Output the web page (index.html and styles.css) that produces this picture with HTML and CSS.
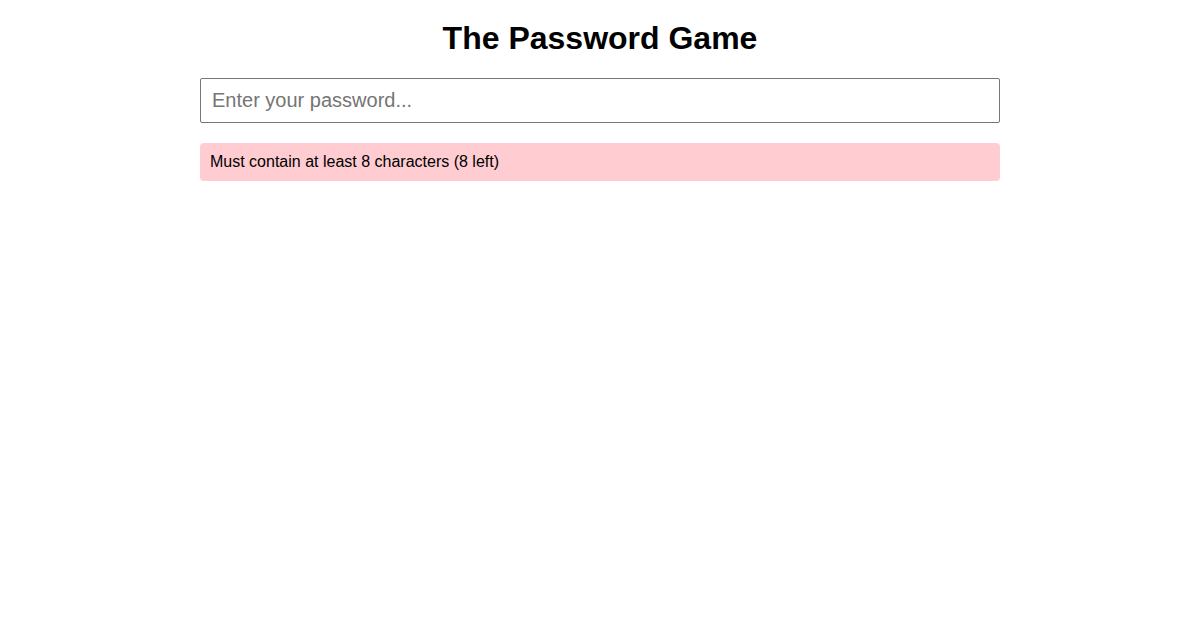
FILE: index.html
```html
<!DOCTYPE html>
<html>
<head>
<meta charset="utf-8">
<link rel="stylesheet" href="styles.css">
</head>
<body>
<main class="game">
  <h1 class="title">The Password Game</h1>
  <input class="password" type="text" placeholder="Enter your password...">
  <div class="rules">
    <div class="rule rule-fail">Must contain at least 8 characters (8 left)</div>
  </div>
</main>
</body>
</html>
```

FILE: styles.css
```css
html, body {
  margin: 0;
  padding: 0;
  background: #fff;
}
body {
  font-family: "Liberation Sans", Arial, sans-serif;
  color: #000;
}
.game {
  width: 800px;
  margin: 0 auto;
  padding-top: 20px;
  display: flex;
  flex-direction: column;
}
.title {
  font-size: 32px;
  line-height: 37px;
  font-weight: bold;
  text-align: center;
  margin: 0 0 21px;
}
.password {
  box-sizing: border-box;
  width: 100%;
  height: 45px;
  padding: 10px 11px;
  font-family: "Liberation Sans", Arial, sans-serif;
  font-size: 20px;
  border: 1px solid #767676;
  border-radius: 2px;
  color: #000;
  margin: 0;
}
.password::placeholder {
  color: #757575;
}
.rules {
  margin-top: 20px;
  display: flex;
  flex-direction: column;
  gap: 10px;
}
.rule {
  padding: 10px;
  font-size: 16px;
  line-height: 18px;
  border-radius: 4px;
}
.rule-fail {
  background: #ffccd2;
  color: #000;
}
```
